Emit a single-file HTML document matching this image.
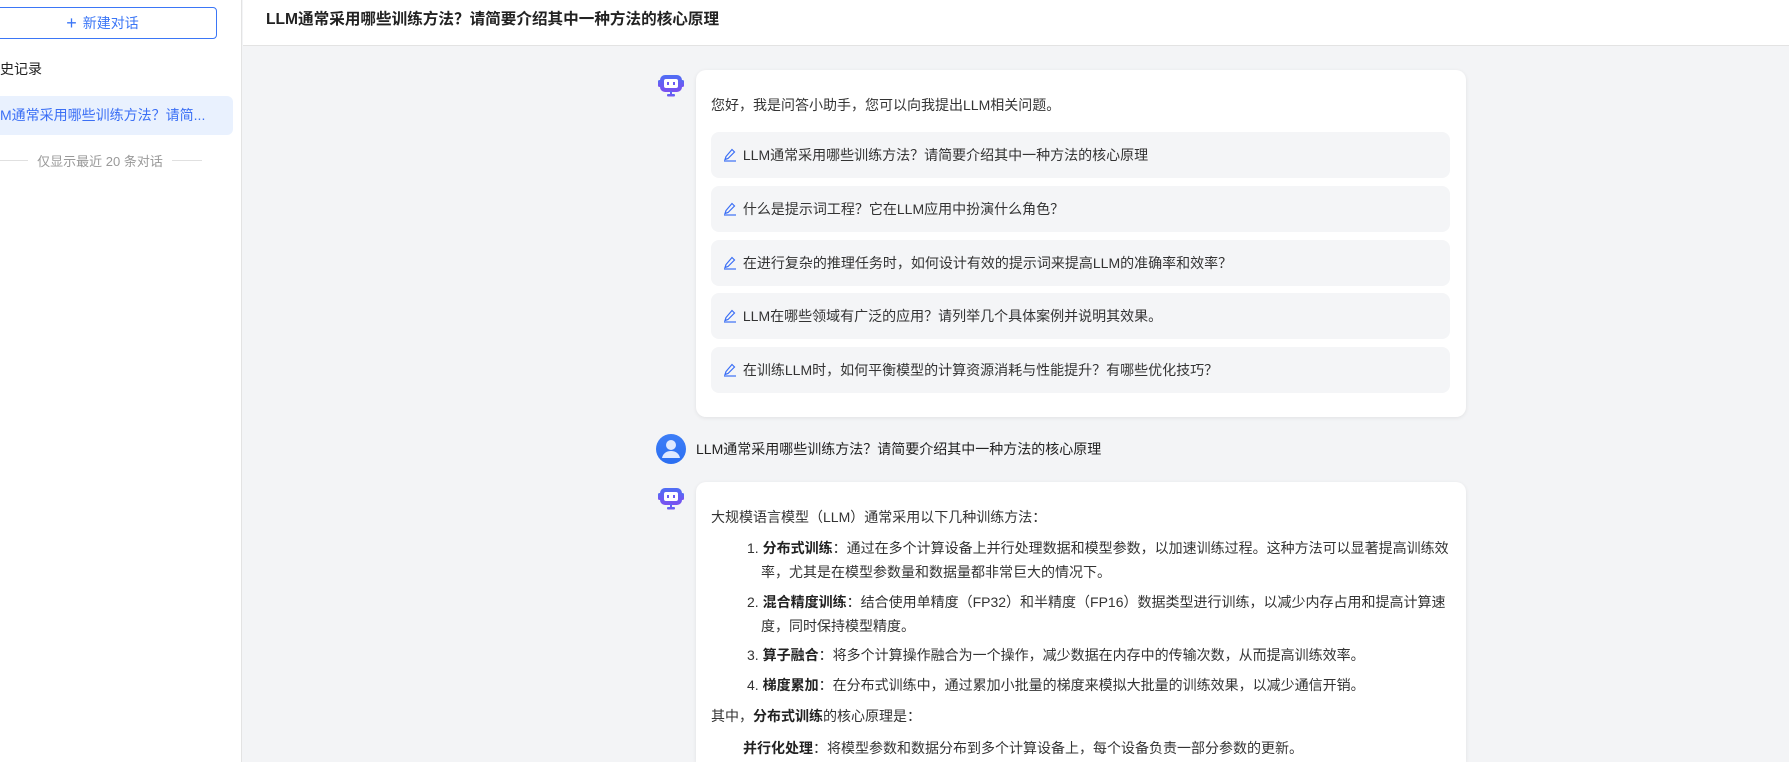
<!DOCTYPE html>
<html style="overflow:hidden;height:762px"><head><meta charset="utf-8"><style>
*{box-sizing:border-box;margin:0;padding:0}
body{width:1789px;height:762px;overflow:hidden;background:#f3f4f6;font-family:"Liberation Sans","Noto Sans CJK SC",sans-serif;color:#333;position:relative}
.side{position:absolute;left:0;top:0;width:242px;height:762px;background:#fff;border-right:1px solid #e3e3e3}
.btn{position:absolute;left:-12px;top:7px;width:229px;height:32px;border:1px solid #3b76f6;border-radius:4px;color:#3b76f6;font-size:14px;display:flex;align-items:center;justify-content:center;gap:6px}
.hist{position:absolute;left:0;top:59px;font-size:14px;color:#222}
.act{position:absolute;left:0;top:96px;width:233px;height:39px;background:#e9f1fe;border-radius:0 6px 6px 0;color:#3b6ff5;font-size:14px;line-height:39px;padding-left:0}
.note{position:absolute;left:0;top:151px;width:200px;font-size:13px;color:#999;display:flex;align-items:center;justify-content:center;gap:9px;white-space:nowrap}
.note i{display:block;flex:0 0 30px;height:1px;background:#e0e0e0}
.head{position:absolute;left:243px;top:0;right:0;height:46px;background:#fff;border-bottom:1px solid #e3e3e3;font-size:15.6px;font-weight:bold;color:#222;line-height:40px;padding-left:23px}
.bot{position:absolute;width:26px;height:24px}
.card{position:absolute;left:696px;width:770px;background:#fff;border-radius:10px;box-shadow:0 1px 4px rgba(0,0,0,.08)}
.sug{position:absolute;left:15px;width:739px;height:46px;background:#f4f5f7;border-radius:8px;font-size:14px;line-height:46px;padding-left:12px;color:#333}
.sug svg{vertical-align:-2px;margin-right:2px}
.t{position:absolute;font-size:14px;color:#333;white-space:nowrap}
b{color:#222}
</style></head><body>
<div class="side">
<div class="btn"><span style="font-size:18px;line-height:1">+</span>新建对话</div>
<div class="hist">史记录</div>
<div class="act">M通常采用哪些训练方法？请简...</div>
<div class="note"><i></i>仅显示最近 20 条对话<i></i></div>
</div>
<div class="head">LLM通常采用哪些训练方法？请简要介绍其中一种方法的核心原理</div>

<svg class="bot" style="left:658px;top:74px" viewBox="0 0 26 24"><defs><linearGradient id="g" x1="0" y1="0" x2="0" y2="1"><stop offset="0" stop-color="#4f6ff5"/><stop offset="1" stop-color="#7b4ff0"/></linearGradient></defs><rect x="0" y="6" width="3" height="7" rx="1.5" fill="url(#g)"/><rect x="23" y="6" width="3" height="7" rx="1.5" fill="url(#g)"/><rect x="2" y="1" width="22" height="17" rx="5" fill="url(#g)"/><rect x="6" y="5" width="14" height="9" rx="2" fill="#fff"/><rect x="9" y="8" width="2" height="3" fill="#6a5af3"/><rect x="15" y="8" width="2" height="3" fill="#6a5af3"/><rect x="9" y="20" width="8" height="2.5" rx="1" fill="url(#g)"/><rect x="12" y="17" width="2" height="4" fill="url(#g)"/></svg>

<div class="card" style="top:70px;height:347px">
<div class="t" style="left:15px;top:25px">您好，我是问答小助手，您可以向我提出LLM相关问题。</div>
<div class="sug" style="top:62px"><svg width="14" height="14" viewBox="0 0 14 14" fill="none" stroke="#3b6ff5" stroke-width="1.2"><path d="M9 1.5l2.5 2.5L5 10.5 2 11.5l1-3z"/><path d="M1 13h12"/></svg> LLM通常采用哪些训练方法？请简要介绍其中一种方法的核心原理</div>
<div class="sug" style="top:116px"><svg width="14" height="14" viewBox="0 0 14 14" fill="none" stroke="#3b6ff5" stroke-width="1.2"><path d="M9 1.5l2.5 2.5L5 10.5 2 11.5l1-3z"/><path d="M1 13h12"/></svg> 什么是提示词工程？它在LLM应用中扮演什么角色？</div>
<div class="sug" style="top:170px"><svg width="14" height="14" viewBox="0 0 14 14" fill="none" stroke="#3b6ff5" stroke-width="1.2"><path d="M9 1.5l2.5 2.5L5 10.5 2 11.5l1-3z"/><path d="M1 13h12"/></svg> 在进行复杂的推理任务时，如何设计有效的提示词来提高LLM的准确率和效率？</div>
<div class="sug" style="top:223px"><svg width="14" height="14" viewBox="0 0 14 14" fill="none" stroke="#3b6ff5" stroke-width="1.2"><path d="M9 1.5l2.5 2.5L5 10.5 2 11.5l1-3z"/><path d="M1 13h12"/></svg> LLM在哪些领域有广泛的应用？请列举几个具体案例并说明其效果。</div>
<div class="sug" style="top:277px"><svg width="14" height="14" viewBox="0 0 14 14" fill="none" stroke="#3b6ff5" stroke-width="1.2"><path d="M9 1.5l2.5 2.5L5 10.5 2 11.5l1-3z"/><path d="M1 13h12"/></svg> 在训练LLM时，如何平衡模型的计算资源消耗与性能提升？有哪些优化技巧？</div>
</div>

<svg style="position:absolute;left:656px;top:434px" width="30" height="30" viewBox="0 0 30 30"><defs><linearGradient id="u" x1="0" y1="0" x2="0" y2="1"><stop offset="0" stop-color="#3d7ef7"/><stop offset="1" stop-color="#2a6ef2"/></linearGradient></defs><circle cx="15" cy="15" r="15" fill="url(#u)"/><circle cx="15" cy="11" r="5" fill="#dfe9ff"/><path d="M6 24c1-5 5-7 9-7s8 2 9 7z" fill="#dfe9ff"/></svg>
<div class="t" style="left:696px;top:439px;color:#222">LLM通常采用哪些训练方法？请简要介绍其中一种方法的核心原理</div>

<svg class="bot" style="left:658px;top:487px" viewBox="0 0 26 24"><rect x="0" y="6" width="3" height="7" rx="1.5" fill="url(#g)"/><rect x="23" y="6" width="3" height="7" rx="1.5" fill="url(#g)"/><rect x="2" y="1" width="22" height="17" rx="5" fill="url(#g)"/><rect x="6" y="5" width="14" height="9" rx="2" fill="#fff"/><rect x="9" y="8" width="2" height="3" fill="#6a5af3"/><rect x="15" y="8" width="2" height="3" fill="#6a5af3"/><rect x="9" y="20" width="8" height="2.5" rx="1" fill="url(#g)"/><rect x="12" y="17" width="2" height="4" fill="url(#g)"/></svg>

<div class="card" style="top:482px;height:280px;border-radius:10px 10px 0 0">
<div class="t" style="left:15px;top:25px">大规模语言模型（LLM）通常采用以下几种训练方法：</div>
<div class="t" style="left:51px;top:56px">1. <b>分布式训练</b>：通过在多个计算设备上并行处理数据和模型参数，以加速训练过程。这种方法可以显著提高训练效</div>
<div class="t" style="left:65px;top:80px">率，尤其是在模型参数量和数据量都非常巨大的情况下。</div>
<div class="t" style="left:51px;top:110px">2. <b>混合精度训练</b>：结合使用单精度（FP32）和半精度（FP16）数据类型进行训练，以减少内存占用和提高计算速</div>
<div class="t" style="left:65px;top:134px">度，同时保持模型精度。</div>
<div class="t" style="left:51px;top:163px">3. <b>算子融合</b>：将多个计算操作融合为一个操作，减少数据在内存中的传输次数，从而提高训练效率。</div>
<div class="t" style="left:51px;top:193px">4. <b>梯度累加</b>：在分布式训练中，通过累加小批量的梯度来模拟大批量的训练效果，以减少通信开销。</div>
<div class="t" style="left:15px;top:224px">其中，<b>分布式训练</b>的核心原理是：</div>
<div class="t" style="left:47px;top:256px"><b>并行化处理</b>：将模型参数和数据分布到多个计算设备上，每个设备负责一部分参数的更新。</div>
</div>
</body></html>
